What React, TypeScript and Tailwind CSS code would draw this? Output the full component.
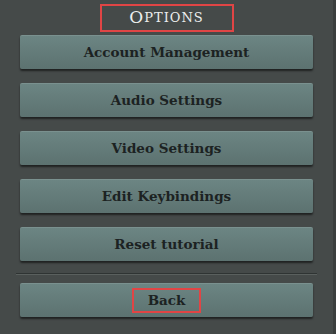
import React from 'react';

const items = ['Account Management', 'Audio Settings', 'Video Settings', 'Edit Keybindings', 'Reset tutorial'];

function MenuButton({ label, boxed }: { label: string; boxed?: boolean }) {
  return (
    <button className="h-[34px] w-full rounded-[2px] bg-gradient-to-b from-[#6c8583] to-[#5c7270] shadow-[0_2px_2px_rgba(0,0,0,0.55)] border-t border-[#7a918f] flex items-center justify-center">
      <span
        className={
          boxed
            ? 'px-[14px] h-[25px] flex items-center border-2 border-[#e04545] text-[13.5px] font-bold text-[#1c2222]'
            : 'text-[13.5px] font-bold text-[#1c2222]'
        }
        style={{ fontFamily: '"DejaVu Serif", "Liberation Serif", serif' }}
      >
        {label}
      </span>
    </button>
  );
}

export default function App() {
  return (
    <div className="w-[336px] h-[334px] bg-[#454a49] border-r-[3px] border-[#3a3e3d] flex flex-col overflow-hidden">
      <div className="flex justify-center pt-[4px]">
        <div
          className="w-[134px] h-[28px] border-2 border-[#e04545] flex items-center justify-center text-[#eceeed] tracking-[1px]"
          style={{ fontFamily: '"DejaVu Serif", "Liberation Serif", serif' }}
        >
          <span className="text-[17px]">O</span>
          <span className="text-[13px]">PTIONS</span>
        </div>
      </div>
      <div className="flex flex-col gap-[14px] px-[20px] mt-[3px]">
        {items.map((it) => (
          <MenuButton key={it} label={it} />
        ))}
      </div>
      <div className="mx-[16px] mt-[12px] h-[2px] bg-[#2f3433] border-b border-[#5a605e]" />
      <div className="px-[20px] mt-[8px]">
        <MenuButton label="Back" boxed />
      </div>
    </div>
  );
}
